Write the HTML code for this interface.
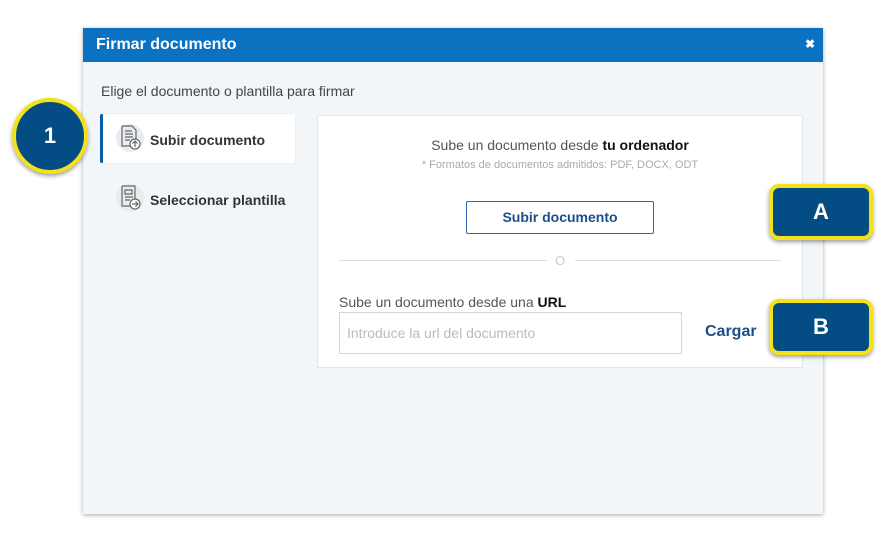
<!DOCTYPE html><html><head><style>
body{margin:0;width:886px;height:539px;background:#fff;font-family:"Liberation Sans",sans-serif;position:relative;overflow:hidden}
.dlg{position:absolute;left:83px;top:28px;width:740px;height:486px;background:#f2f6f9;box-shadow:0 1px 4px rgba(0,0,0,.35)}
.hd{height:34px;background:#0a72c1;color:#fff;font-weight:bold;font-size:16px;line-height:33px;padding-left:13px;position:relative}
.x{position:absolute;right:8px;top:0;font-size:12px}
.abs{position:absolute}
.badge{position:absolute;background:#044c84;border:4px solid #f3e21a;color:#fff;font-size:22px;font-weight:bold;text-align:center;box-shadow:0 2px 4px rgba(0,0,0,.4);box-sizing:border-box}
</style></head><body>
<div class="dlg">
<div class="hd">Firmar documento<span class="x">✖</span></div>
<div class="abs" style="left:18px;top:55px;font-size:14px;color:#444">Elige el documento o plantilla para firmar</div>
<div class="abs" style="left:17px;top:86px;width:195px;height:49px;background:#fff;border-left:3px solid #0a5ea8;box-sizing:border-box;border-radius:2px;box-shadow:0 0 1px rgba(0,0,0,.15)"></div>
<div class="abs" style="left:33px;top:96px;width:28px;height:28px;border-radius:50%;background:#e9ecef"></div>
<svg class="abs" style="left:37px;top:97px" width="22" height="26" viewBox="0 0 22 26" fill="none" stroke="#666" stroke-width="1.2"><path d="M2 1h10l4 4v10M2 1v20h8M5 6h7M5 9h8M5 12h8M5 15h5"/><circle cx="15" cy="19" r="5" fill="#fff"/><path d="M15 22v-6M12.5 18.5L15 16l2.5 2.5"/></svg>
<div class="abs" style="left:67px;top:104px;font-size:14px;font-weight:bold;color:#333">Subir documento</div>
<div class="abs" style="left:33px;top:156px;width:28px;height:28px;border-radius:50%;background:#e9ecef"></div>
<svg class="abs" style="left:37px;top:157px" width="22" height="26" viewBox="0 0 22 26" fill="none" stroke="#666" stroke-width="1.2"><path d="M2 1h13v13M2 1v20h8M5 5h7v4h-7zM5 12h8M5 15h5"/><circle cx="15" cy="19" r="5" fill="#fff"/><path d="M12 19h6M15.5 16.5L18 19l-2.5 2.5"/></svg>
<div class="abs" style="left:67px;top:164px;font-size:14px;font-weight:bold;color:#333">Seleccionar plantilla</div>
<div class="abs" style="left:234px;top:87px;width:486px;height:253px;background:#fff;border:1px solid #e3e7ea;box-sizing:border-box"></div>
<div class="abs" style="left:234px;top:109px;width:486px;text-align:center;font-size:14px;color:#555">Sube un documento desde <b style="color:#111">tu ordenador</b></div>
<div class="abs" style="left:234px;top:131px;width:486px;text-align:center;font-size:11px;color:#aaa">* Formatos de documentos admitidos: PDF, DOCX, ODT</div>
<div class="abs" style="left:383px;top:173px;width:188px;height:33px;border:1px solid #2a6aa8;box-sizing:border-box;border-radius:2px;background:#fff;text-align:center;line-height:31px;font-size:14px;font-weight:bold;color:#1a4f8a">Subir documento</div>
<div class="abs" style="left:256px;top:232px;width:208px;height:1px;background:#ddd"></div>
<div class="abs" style="left:492px;top:232px;width:206px;height:1px;background:#ddd"></div>
<div class="abs" style="left:472px;top:225px;font-size:13px;color:#ccc">O</div>
<div class="abs" style="left:256px;top:266px;font-size:14px;color:#555">Sube un documento desde una <b style="color:#111">URL</b></div>
<div class="abs" style="left:256px;top:284px;width:343px;height:42px;border:1px solid #d6d6d6;box-sizing:border-box;background:#fff;font-size:14px;color:#bbb;line-height:40px;padding-left:7px">Introduce la url del documento</div>
<div class="abs" style="left:622px;top:295px;font-size:16px;font-weight:bold;color:#1a4f8a">Cargar</div>
</div>
<div class="badge" style="left:12px;top:98px;width:76px;height:76px;border-radius:50%;line-height:68px">1</div>
<div class="badge" style="left:769px;top:184px;width:104px;height:56px;border-radius:10px;line-height:48px">A</div>
<div class="badge" style="left:769px;top:299px;width:104px;height:56px;border-radius:10px;line-height:48px">B</div>
</body></html>
